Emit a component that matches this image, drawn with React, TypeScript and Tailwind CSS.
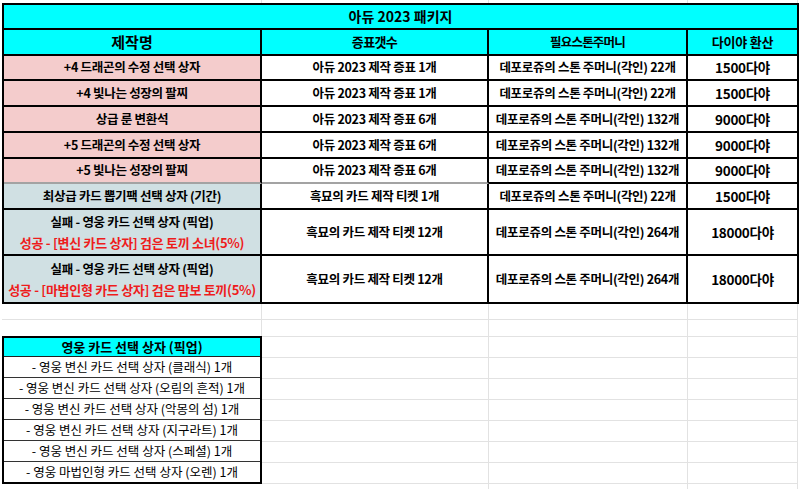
import type { ReactNode } from 'react';

const FONT = "font-['Noto_Sans_CJK_KR','Noto_Sans',sans-serif]";
const GRID = 'border-[#e2e2e2]';

type PackRow = {
  name: ReactNode;
  bg: string;
  cert: string;
  stone: string;
  dia: string;
  h: string;
  grayBottom?: boolean;
  last?: boolean;
};

const twoLine = (fail: string, success: string) => (
  <div className="flex flex-col items-center leading-[21px]">
    <span>{fail}</span>
    <span className="text-[#ee1c1c] text-[13px]">{success}</span>
  </div>
);

const rows: PackRow[] = [
  { name: '+4 드래곤의 수정 선택 상자', bg: 'bg-[#f4cccc]', cert: '아듀 2023 제작 증표 1개', stone: '데포로쥬의 스톤 주머니(각인) 22개', dia: '1500다야', h: 'h-[25px]' },
  { name: '+4 빛나는 성장의 팔찌', bg: 'bg-[#f4cccc]', cert: '아듀 2023 제작 증표 1개', stone: '데포로쥬의 스톤 주머니(각인) 22개', dia: '1500다야', h: 'h-[26px]' },
  { name: '상급 룬 변환석', bg: 'bg-[#f4cccc]', cert: '아듀 2023 제작 증표 6개', stone: '데포로쥬의 스톤 주머니(각인) 132개', dia: '9000다야', h: 'h-[26px]' },
  { name: '+5 드래곤의 수정 선택 상자', bg: 'bg-[#f4cccc]', cert: '아듀 2023 제작 증표 6개', stone: '데포로쥬의 스톤 주머니(각인) 132개', dia: '9000다야', h: 'h-[26px]' },
  { name: '+5 빛나는 성장의 팔찌', bg: 'bg-[#f4cccc]', cert: '아듀 2023 제작 증표 6개', stone: '데포로쥬의 스톤 주머니(각인) 132개', dia: '9000다야', h: 'h-[25px]', grayBottom: true },
  { name: '최상급 카드 뽑기팩 선택 상자 (기간)', bg: 'bg-[#d0e0e3]', cert: '흑묘의 카드 제작 티켓 1개', stone: '데포로쥬의 스톤 주머니(각인) 22개', dia: '1500다야', h: 'h-[26px]' },
  {
    name: twoLine('실패 - 영웅 카드 선택 상자 (픽업)', '성공 - [변신 카드 상자] 검은 토끼 소녀(5%)'),
    bg: 'bg-[#d0e0e3]',
    cert: '흑묘의 카드 제작 티켓 12개',
    stone: '데포로쥬의 스톤 주머니(각인) 264개',
    dia: '18000다야',
    h: 'h-[46px]',
  },
  {
    name: twoLine('실패 - 영웅 카드 선택 상자 (픽업)', '성공 - [마법인형 카드 상자] 검은 맘보 토끼(5%)'),
    bg: 'bg-[#d0e0e3]',
    cert: '흑묘의 카드 제작 티켓 12개',
    stone: '데포로쥬의 스톤 주머니(각인) 264개',
    dia: '18000다야',
    h: 'h-[46px]',
    last: true,
  },
];

const heroBoxes = [
  '- 영웅 변신 카드 선택 상자 (클래식) 1개',
  '- 영웅 변신 카드 선택 상자 (오림의 흔적) 1개',
  '- 영웅 변신 카드 선택 상자 (악몽의 섬) 1개',
  '- 영웅 변신 카드 선택 상자 (지구라트) 1개',
  '- 영웅 변신 카드 선택 상자 (스페셜) 1개',
  '- 영웅 마법인형 카드 선택 상자 (오렌) 1개',
];

const lowerHeights = ['h-[16px]', 'h-[17px]', 'h-[21px]', 'h-[21px]', 'h-[21px]', 'h-[21px]', 'h-[21px]', 'h-[21px]', 'h-[21px]', 'h-[10px]'];

function GridColumn({ w }: { w: string }) {
  return (
    <div className={`${w} flex flex-col border-r ${GRID}`}>
      {lowerHeights.map((h, i) => (
        <div key={i} className={`${h} border-b ${GRID}`} />
      ))}
    </div>
  );
}

export default function App() {
  return (
    <div className={`w-[800px] h-[489px] overflow-hidden bg-white pl-[2px] text-black ${FONT}`}>
      {/* top strip of the sheet grid */}
      <div className="flex h-[3px]">
        <div className={`w-[260px] border-r ${GRID}`} />
        <div className={`w-[227px] border-r ${GRID}`} />
        <div className={`w-[199px] border-r ${GRID}`} />
        <div className={`w-[110px] border-r ${GRID}`} />
      </div>

      {/* package table */}
      <div className="w-[797px] border-2 border-black font-bold">
        <div className="h-[25px] flex items-center justify-center bg-[#00ffff] border-b-2 border-black text-[14px]">
          아듀 2023 패키지
        </div>
        <div className="h-[26px] flex bg-[#00ffff] border-b-2 border-black">
          <div className="w-[258px] flex items-center justify-center border-r-2 border-black text-[15px]">제작명</div>
          <div className="w-[227px] flex items-center justify-center border-r-2 border-black text-[13px] tracking-[-0.6px]">증표갯수</div>
          <div className="w-[199px] flex items-center justify-center border-r-2 border-black text-[12.5px] tracking-[-0.8px]">필요스톤주머니</div>
          <div className="w-[109px] flex items-center justify-center text-[13px] tracking-[-0.2px]">다이야 환산</div>
        </div>
        {rows.map((r, i) => {
          const bottomA = r.last ? '' : r.grayBottom ? 'border-b-2 border-b-[#a3a3a3]' : 'border-b-2 border-b-black';
          const bottomB = r.last ? '' : 'border-b-2 border-b-black';
          return (
            <div key={i} className={`${r.h} flex text-[12.5px] tracking-[-0.3px]`}>
              <div className={`w-[258px] flex items-center justify-center border-r-2 border-r-black ${bottomA} ${r.bg}`}>{r.name}</div>
              <div className={`w-[227px] flex items-center justify-center border-r-2 border-r-black ${bottomA}`}>{r.cert}</div>
              <div className={`w-[199px] flex items-center justify-center border-r-2 border-r-black ${bottomB}`}>{r.stone}</div>
              <div className={`w-[109px] flex items-center justify-center text-[13.5px] ${bottomB}`}>{r.dia}</div>
            </div>
          );
        })}
      </div>

      {/* lower sheet area */}
      <div className="flex">
        <div className="w-[260px] flex flex-col">
          <div className={`h-[16px] border-b border-r ${GRID}`} />
          <div className={`h-[16px] border-r ${GRID}`} />
          <div className="border-2 border-black">
            <div className="h-[19px] flex items-center justify-center bg-[#00ffff] border-b border-[#222] font-bold text-[13px]">
              영웅 카드 선택 상자 (픽업)
            </div>
            {heroBoxes.map((t, i) => (
              <div
                key={t}
                className={`${i === heroBoxes.length - 1 ? 'h-[20px]' : 'h-[21px] border-b border-[#333]'} flex items-center justify-center text-[12.5px]`}
              >
                {t}
              </div>
            ))}
          </div>
        </div>
        <GridColumn w="w-[227px]" />
        <GridColumn w="w-[199px]" />
        <GridColumn w="w-[110px]" />
      </div>
    </div>
  );
}
